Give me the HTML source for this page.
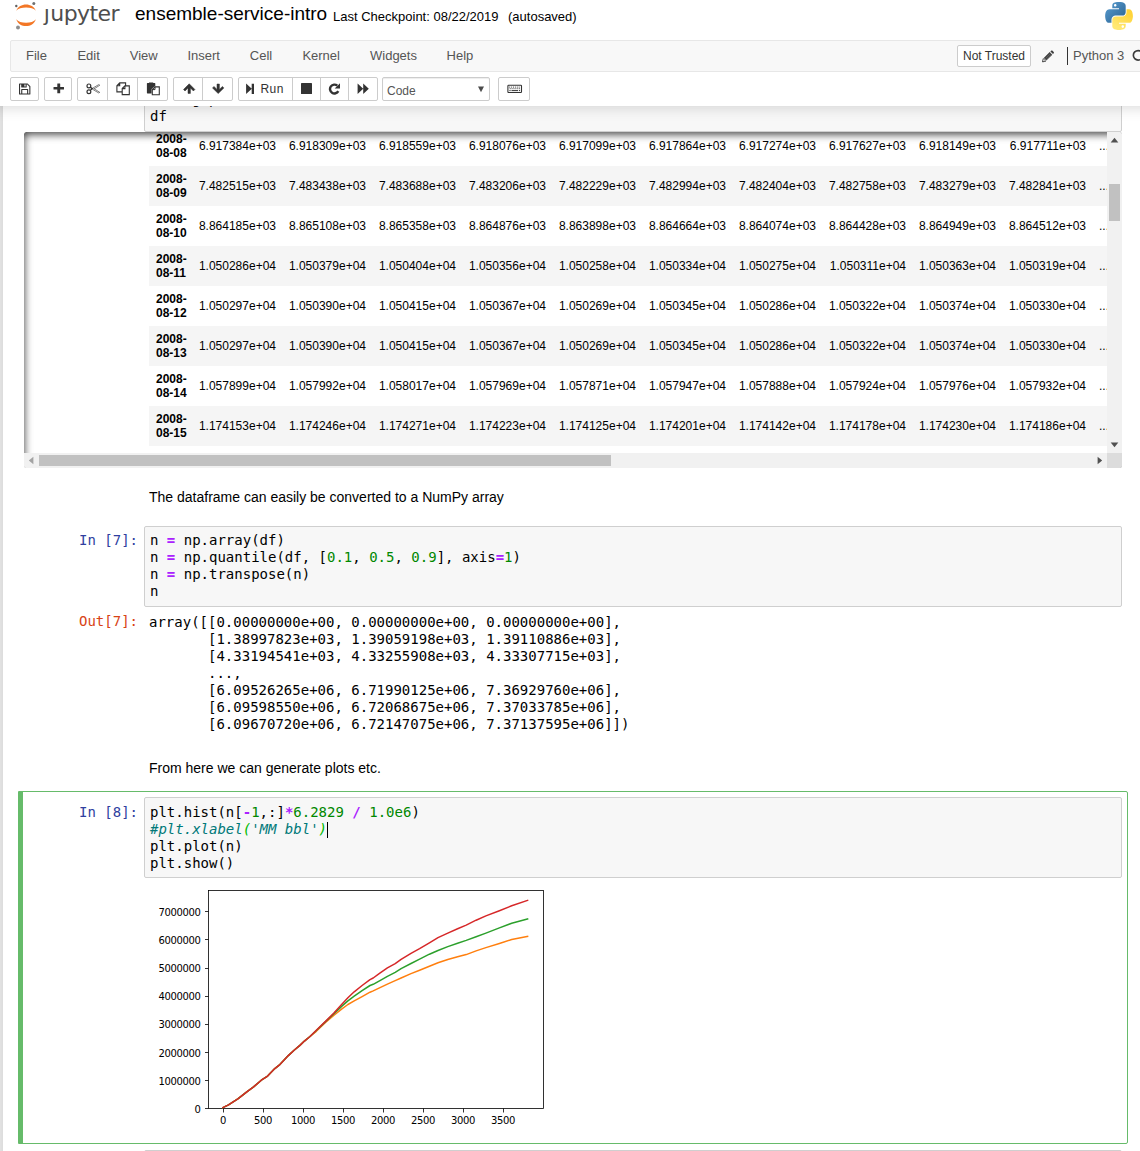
<!DOCTYPE html>
<html lang="en">
<head>
<meta charset="utf-8">
<title>ensemble-service-intro - Jupyter Notebook</title>
<style>
*{box-sizing:border-box;margin:0;padding:0}
html,body{width:1140px;height:1151px;overflow:hidden;background:#fff}
body{position:relative;font-family:"Liberation Sans",Arial,sans-serif;font-size:13px;color:#000}
.abs{position:absolute}
.mono{font-family:"DejaVu Sans Mono","Liberation Mono",monospace;font-size:14px;line-height:17px;white-space:pre}
/* page background strip */
#leftstrip{left:0;top:106px;width:3px;height:1045px;background:linear-gradient(to right,#e2e2e2,#dcdcdc)}
/* header */
#headerbg{left:-40px;top:0;width:1260px;height:106px;background:#fff;box-shadow:0 1px 12px 1px rgba(87,87,87,.22);z-index:9}
#header{left:0;top:0;width:1140px;height:106px;z-index:10}
#menubar{left:10px;top:40px;width:1160px;height:32px;background:#f8f8f8;border:1px solid #e7e7e7;border-radius:2px}
.menu{top:48px;font-size:13px;line-height:15px;color:#555}
.tbtn{top:77px;height:24px;background:#fff;border:1px solid #ccc;border-radius:2px}
.tdiv{top:78px;width:1px;height:22px;background:#ccc}
.ticon{position:absolute}
#title{left:135px;top:3px;font-size:19px;line-height:22px;color:#000;white-space:nowrap}
#chk{left:333px;top:9px;font-size:13px;line-height:15px;white-space:pre}
#auto{left:508px;top:9px;font-size:13px;line-height:15px}
/* cells */
.inbox{left:144px;width:978px;background:#f7f7f7;border:1px solid #cfcfcf;border-radius:2px}
.prompt-in{color:#303F9F}
.prompt-out{color:#D84315}
.md{left:149px;font-size:14px;line-height:20px;white-space:nowrap}
.k{color:#008000;font-weight:bold}.o{color:#AA22FF;font-weight:bold}.n{color:#080}.c{color:#007979;font-style:italic}.mb{color:#0b0}
/* table */
#scroll{left:24px;top:132px;width:1098px;height:336px;border-radius:2px;overflow:hidden;background:#fff}
#scrollshadow{left:0;top:0;width:1098px;height:336px;box-shadow:inset 0 2px 8px rgba(0,0,0,.8);border-radius:2px;pointer-events:none;z-index:0}
.row{left:125px;width:958px;height:40px;z-index:1}
.row.g{background:#f5f5f5}
.idx{left:7px;top:7px;font-size:12px;line-height:13.5px;font-weight:bold;width:40px}
.v{top:13px;width:90px;text-align:right;font-size:12px;line-height:14px;white-space:nowrap}
</style>
</head>
<body>
<div id="leftstrip" class="abs"></div>

<!-- NOTEBOOK -->
<div id="nb" class="abs" style="left:0;top:0;width:1140px;height:1151px">
<div class="abs inbox" style="top:60px;height:72px"></div>
<div class="abs mono" style="left:150px;top:91px">df = g.pivot()
df</div>
<div id="scroll" class="abs">
<div class="abs row" style="top:-6px"><div class="abs idx">2008-<br>08-08</div>
<div class="abs v" style="left:37px">6.917384e+03</div>
<div class="abs v" style="left:127px">6.918309e+03</div>
<div class="abs v" style="left:217px">6.918559e+03</div>
<div class="abs v" style="left:307px">6.918076e+03</div>
<div class="abs v" style="left:397px">6.917099e+03</div>
<div class="abs v" style="left:487px">6.917864e+03</div>
<div class="abs v" style="left:577px">6.917274e+03</div>
<div class="abs v" style="left:667px">6.917627e+03</div>
<div class="abs v" style="left:757px">6.918149e+03</div>
<div class="abs v" style="left:847px">6.917711e+03</div>
<div class="abs v" style="left:950px;width:20px;text-align:left">...</div></div>
<div class="abs row g" style="top:34px"><div class="abs idx">2008-<br>08-09</div>
<div class="abs v" style="left:37px">7.482515e+03</div>
<div class="abs v" style="left:127px">7.483438e+03</div>
<div class="abs v" style="left:217px">7.483688e+03</div>
<div class="abs v" style="left:307px">7.483206e+03</div>
<div class="abs v" style="left:397px">7.482229e+03</div>
<div class="abs v" style="left:487px">7.482994e+03</div>
<div class="abs v" style="left:577px">7.482404e+03</div>
<div class="abs v" style="left:667px">7.482758e+03</div>
<div class="abs v" style="left:757px">7.483279e+03</div>
<div class="abs v" style="left:847px">7.482841e+03</div>
<div class="abs v" style="left:950px;width:20px;text-align:left">...</div></div>
<div class="abs row" style="top:74px"><div class="abs idx">2008-<br>08-10</div>
<div class="abs v" style="left:37px">8.864185e+03</div>
<div class="abs v" style="left:127px">8.865108e+03</div>
<div class="abs v" style="left:217px">8.865358e+03</div>
<div class="abs v" style="left:307px">8.864876e+03</div>
<div class="abs v" style="left:397px">8.863898e+03</div>
<div class="abs v" style="left:487px">8.864664e+03</div>
<div class="abs v" style="left:577px">8.864074e+03</div>
<div class="abs v" style="left:667px">8.864428e+03</div>
<div class="abs v" style="left:757px">8.864949e+03</div>
<div class="abs v" style="left:847px">8.864512e+03</div>
<div class="abs v" style="left:950px;width:20px;text-align:left">...</div></div>
<div class="abs row g" style="top:114px"><div class="abs idx">2008-<br>08-11</div>
<div class="abs v" style="left:37px">1.050286e+04</div>
<div class="abs v" style="left:127px">1.050379e+04</div>
<div class="abs v" style="left:217px">1.050404e+04</div>
<div class="abs v" style="left:307px">1.050356e+04</div>
<div class="abs v" style="left:397px">1.050258e+04</div>
<div class="abs v" style="left:487px">1.050334e+04</div>
<div class="abs v" style="left:577px">1.050275e+04</div>
<div class="abs v" style="left:667px">1.050311e+04</div>
<div class="abs v" style="left:757px">1.050363e+04</div>
<div class="abs v" style="left:847px">1.050319e+04</div>
<div class="abs v" style="left:950px;width:20px;text-align:left">...</div></div>
<div class="abs row" style="top:154px"><div class="abs idx">2008-<br>08-12</div>
<div class="abs v" style="left:37px">1.050297e+04</div>
<div class="abs v" style="left:127px">1.050390e+04</div>
<div class="abs v" style="left:217px">1.050415e+04</div>
<div class="abs v" style="left:307px">1.050367e+04</div>
<div class="abs v" style="left:397px">1.050269e+04</div>
<div class="abs v" style="left:487px">1.050345e+04</div>
<div class="abs v" style="left:577px">1.050286e+04</div>
<div class="abs v" style="left:667px">1.050322e+04</div>
<div class="abs v" style="left:757px">1.050374e+04</div>
<div class="abs v" style="left:847px">1.050330e+04</div>
<div class="abs v" style="left:950px;width:20px;text-align:left">...</div></div>
<div class="abs row g" style="top:194px"><div class="abs idx">2008-<br>08-13</div>
<div class="abs v" style="left:37px">1.050297e+04</div>
<div class="abs v" style="left:127px">1.050390e+04</div>
<div class="abs v" style="left:217px">1.050415e+04</div>
<div class="abs v" style="left:307px">1.050367e+04</div>
<div class="abs v" style="left:397px">1.050269e+04</div>
<div class="abs v" style="left:487px">1.050345e+04</div>
<div class="abs v" style="left:577px">1.050286e+04</div>
<div class="abs v" style="left:667px">1.050322e+04</div>
<div class="abs v" style="left:757px">1.050374e+04</div>
<div class="abs v" style="left:847px">1.050330e+04</div>
<div class="abs v" style="left:950px;width:20px;text-align:left">...</div></div>
<div class="abs row" style="top:234px"><div class="abs idx">2008-<br>08-14</div>
<div class="abs v" style="left:37px">1.057899e+04</div>
<div class="abs v" style="left:127px">1.057992e+04</div>
<div class="abs v" style="left:217px">1.058017e+04</div>
<div class="abs v" style="left:307px">1.057969e+04</div>
<div class="abs v" style="left:397px">1.057871e+04</div>
<div class="abs v" style="left:487px">1.057947e+04</div>
<div class="abs v" style="left:577px">1.057888e+04</div>
<div class="abs v" style="left:667px">1.057924e+04</div>
<div class="abs v" style="left:757px">1.057976e+04</div>
<div class="abs v" style="left:847px">1.057932e+04</div>
<div class="abs v" style="left:950px;width:20px;text-align:left">...</div></div>
<div class="abs row g" style="top:274px"><div class="abs idx">2008-<br>08-15</div>
<div class="abs v" style="left:37px">1.174153e+04</div>
<div class="abs v" style="left:127px">1.174246e+04</div>
<div class="abs v" style="left:217px">1.174271e+04</div>
<div class="abs v" style="left:307px">1.174223e+04</div>
<div class="abs v" style="left:397px">1.174125e+04</div>
<div class="abs v" style="left:487px">1.174201e+04</div>
<div class="abs v" style="left:577px">1.174142e+04</div>
<div class="abs v" style="left:667px">1.174178e+04</div>
<div class="abs v" style="left:757px">1.174230e+04</div>
<div class="abs v" style="left:847px">1.174186e+04</div>
<div class="abs v" style="left:950px;width:20px;text-align:left">...</div></div>
<div id="scrollshadow" class="abs"></div>
<div class="abs" style="left:1083px;top:0;width:15px;height:321px;background:#f1f1f1;z-index:4"></div>
<div class="abs" style="left:1085px;top:52px;width:11px;height:37px;background:#c1c1c1;z-index:5"></div>
<svg class="abs" style="left:1086px;top:5px;z-index:5" width="9" height="6" viewBox="0 0 9 6"><path d="M0.7,5.4 L4.5,0.8 L8.3,5.4Z" fill="#505050"/></svg>
<svg class="abs" style="left:1086px;top:310px;z-index:5" width="9" height="6" viewBox="0 0 9 6"><path d="M0.7,0.6 L4.5,5.2 L8.3,0.6Z" fill="#505050"/></svg>
<div class="abs" style="left:0;top:321px;width:1083px;height:15px;background:#f1f1f1;z-index:4"></div>
<div class="abs" style="left:15px;top:323px;width:572px;height:11px;background:#c1c1c1;z-index:5"></div>
<svg class="abs" style="left:4px;top:324px;z-index:5" width="6" height="9" viewBox="0 0 6 9"><path d="M5.4,0.7 L0.8,4.5 L5.4,8.3Z" fill="#a3a3a3"/></svg>
<svg class="abs" style="left:1073px;top:324px;z-index:5" width="6" height="9" viewBox="0 0 6 9"><path d="M0.6,0.7 L5.2,4.5 L0.6,8.3Z" fill="#505050"/></svg>
<div class="abs" style="left:1083px;top:321px;width:15px;height:15px;background:#dcdcdc;z-index:4"></div>
</div>
<div class="abs md" style="top:487px">The dataframe can easily be converted to a NumPy array</div>
<div class="abs inbox" style="top:526px;height:81px"></div>
<div class="abs mono prompt-in" style="left:79px;top:532px">In [7]:</div>
<div class="abs mono" style="left:150px;top:532px">n <span class="o">=</span> np.array(df)
n <span class="o">=</span> np.quantile(df, [<span class="n">0.1</span>, <span class="n">0.5</span>, <span class="n">0.9</span>], axis<span class="o">=</span><span class="n">1</span>)
n <span class="o">=</span> np.transpose(n)
n</div>
<div class="abs mono prompt-out" style="left:79px;top:613px">Out[7]:</div>
<div class="abs mono" style="left:149px;top:614px">array([[0.00000000e+00, 0.00000000e+00, 0.00000000e+00],
       [1.38997823e+03, 1.39059198e+03, 1.39110886e+03],
       [4.33194541e+03, 4.33255908e+03, 4.33307715e+03],
       ...,
       [6.09526265e+06, 6.71990125e+06, 7.36929760e+06],
       [6.09598550e+06, 6.72068675e+06, 7.37033785e+06],
       [6.09670720e+06, 6.72147075e+06, 7.37137595e+06]])</div>
<div class="abs md" style="top:758px">From here we can generate plots etc.</div>
<div class="abs" style="left:18px;top:791px;width:1110px;height:353px;border:1px solid #66BB6A;border-radius:0 2px 2px 0;background:linear-gradient(to right,#66BB6A 0,#66BB6A 4px,transparent 4px)"></div>
<div class="abs inbox" style="top:797px;height:81px"></div>
<div class="abs mono prompt-in" style="left:79px;top:804px">In [8]:</div>
<div class="abs mono" style="left:150px;top:804px">plt.hist(n[<span class="o">-</span><span class="n">1</span>,:]<span class="o">*</span><span class="n">6.2829</span> <span class="o">/</span> <span class="n">1.0e6</span>)
<span class="c">#plt.xlabel<span class="mb">(</span>'MM bbl'<span class="mb">)</span></span>
plt.plot(n)
plt.show()</div>
<div class="abs" style="left:327px;top:822px;width:1px;height:16px;background:#000"></div>
<svg class="abs" style="left:150px;top:884px" width="400" height="252" viewBox="0 0 400 252" font-family="DejaVu Sans, sans-serif" font-size="10" fill="#000">
<rect x="58.5" y="6.5" width="335" height="218" fill="#fff" stroke="#000" stroke-width="0.8"/>
<path d="M73.5,224.5 v4" stroke="#000" stroke-width="0.8"/>
<text x="73.0" y="240.1" text-anchor="middle" letter-spacing="-0.36">0</text>
<path d="M113.5,224.5 v4" stroke="#000" stroke-width="0.8"/>
<text x="113.0" y="240.1" text-anchor="middle" letter-spacing="-0.36">500</text>
<path d="M153.5,224.5 v4" stroke="#000" stroke-width="0.8"/>
<text x="153.0" y="240.1" text-anchor="middle" letter-spacing="-0.36">1000</text>
<path d="M193.5,224.5 v4" stroke="#000" stroke-width="0.8"/>
<text x="193.0" y="240.1" text-anchor="middle" letter-spacing="-0.36">1500</text>
<path d="M233.5,224.5 v4" stroke="#000" stroke-width="0.8"/>
<text x="233.0" y="240.1" text-anchor="middle" letter-spacing="-0.36">2000</text>
<path d="M273.5,224.5 v4" stroke="#000" stroke-width="0.8"/>
<text x="273.0" y="240.1" text-anchor="middle" letter-spacing="-0.36">2500</text>
<path d="M313.5,224.5 v4" stroke="#000" stroke-width="0.8"/>
<text x="313.0" y="240.1" text-anchor="middle" letter-spacing="-0.36">3000</text>
<path d="M353.5,224.5 v4" stroke="#000" stroke-width="0.8"/>
<text x="353.0" y="240.1" text-anchor="middle" letter-spacing="-0.36">3500</text>
<path d="M58.5,224.5 h-3.5" stroke="#000" stroke-width="0.8"/>
<text x="50.5" y="228.7" text-anchor="end" letter-spacing="-0.36">0</text>
<path d="M58.5,196.5 h-3.5" stroke="#000" stroke-width="0.8"/>
<text x="50.5" y="200.6" text-anchor="end" letter-spacing="-0.36">1000000</text>
<path d="M58.5,168.5 h-3.5" stroke="#000" stroke-width="0.8"/>
<text x="50.5" y="172.5" text-anchor="end" letter-spacing="-0.36">2000000</text>
<path d="M58.5,140.5 h-3.5" stroke="#000" stroke-width="0.8"/>
<text x="50.5" y="144.4" text-anchor="end" letter-spacing="-0.36">3000000</text>
<path d="M58.5,112.5 h-3.5" stroke="#000" stroke-width="0.8"/>
<text x="50.5" y="116.3" text-anchor="end" letter-spacing="-0.36">4000000</text>
<path d="M58.5,84.5 h-3.5" stroke="#000" stroke-width="0.8"/>
<text x="50.5" y="88.2" text-anchor="end" letter-spacing="-0.36">5000000</text>
<path d="M58.5,55.5 h-3.5" stroke="#000" stroke-width="0.8"/>
<text x="50.5" y="60.2" text-anchor="end" letter-spacing="-0.36">6000000</text>
<path d="M58.5,27.5 h-3.5" stroke="#000" stroke-width="0.8"/>
<text x="50.5" y="32.1" text-anchor="end" letter-spacing="-0.36">7000000</text>
<polyline points="72.9,223.6 78.5,220.8 88.2,214.7 96.8,207.8 103.6,202.9 111.3,196.2 117.6,192.1 124.8,184.6 129.2,181.2 138.3,171.6 144.1,166.3 149.9,161.4 154.7,156.8 160.0,152.5 166.3,147.3 175.8,138.2 183.7,131.5 191.6,125.2 197.9,120.5 204.2,116.9 212.1,112.6 220.0,108.2 223.2,106.9 229.5,103.9 237.4,100.1 245.2,96.6 251.1,94.0 261.0,89.6 269.6,86.2 279.4,82.2 288.0,78.8 297.8,75.5 307.6,72.8 316.2,70.6 326.1,66.9 335.9,63.6 349.4,59.5 361.7,55.5 377.6,52.4" fill="none" stroke="#ff7f0e" stroke-width="1.5" stroke-linejoin="round" stroke-linecap="square"/>
<polyline points="72.9,223.6 78.5,220.8 88.2,214.7 96.8,207.8 103.6,202.9 111.3,196.2 117.6,192.1 124.8,184.6 129.2,181.2 138.3,171.6 144.1,166.3 149.9,161.4 154.7,156.8 160.0,152.5 166.3,146.5 175.8,137.4 183.7,129.9 191.6,122.4 197.9,116.9 204.2,112.2 212.1,106.7 220.0,101.5 223.2,100.3 229.5,96.8 237.4,92.4 245.2,88.3 251.1,84.6 261.0,79.5 269.6,75.2 279.4,70.2 288.0,66.5 297.8,62.6 307.6,59.3 316.2,56.4 326.1,52.8 335.9,49.1 349.4,43.9 361.7,39.2 377.6,34.9" fill="none" stroke="#2ca02c" stroke-width="1.5" stroke-linejoin="round" stroke-linecap="square"/>
<polyline points="72.9,223.6 78.5,220.8 88.2,214.7 96.8,207.8 103.6,202.9 111.3,196.2 117.6,192.1 124.8,184.6 129.2,181.2 138.3,171.6 144.1,166.3 149.9,161.4 154.7,156.8 160.0,152.5 166.3,146.2 175.8,137.1 183.7,129.2 191.6,120.5 197.9,113.8 204.2,107.8 212.1,101.5 220.0,95.6 223.2,94.0 229.5,89.3 237.4,83.8 245.2,79.6 251.1,75.4 261.0,69.3 269.6,64.7 279.4,58.9 288.0,53.6 297.8,49.1 307.6,44.8 316.2,41.1 326.1,36.2 335.9,31.9 349.4,26.7 361.7,21.8 377.6,16.4" fill="none" stroke="#d62728" stroke-width="1.5" stroke-linejoin="round" stroke-linecap="square"/>
</svg>
<div class="abs inbox" style="top:1150px;height:40px"></div>
</div>

<!-- HEADER -->
<div id="headerbg" class="abs"></div>
<div id="header" class="abs">
<!-- jupyter logo -->
<svg class="abs" style="left:12px;top:0" width="112" height="34" viewBox="0 0 112 34">
  <path d="M4.2,10.8 C7.2,2.3 20.9,2.3 23.9,10.8 C20.4,6.4 7.7,6.4 4.2,10.8Z" fill="#F37726"/>
  <path d="M4.2,19.2 C7.2,28.4 20.9,28.4 23.9,19.2 C20.4,23.9 7.7,23.9 4.2,19.2Z" fill="#F37726"/>
  <circle cx="21.8" cy="3.6" r="1.5" fill="#6f7070"/>
  <circle cx="4.3" cy="6" r="1.2" fill="#616262"/>
  <circle cx="6" cy="27.5" r="1.95" fill="#8e8e8e"/>
  <text x="31.8 38.3" y="20.5" font-family="DejaVu Sans, Liberation Sans, sans-serif" font-size="22" fill="#4E4E4E" letter-spacing="-0.6">jupyter</text>
  <rect x="31" y="0" width="6.5" height="8" fill="#fff"/>
</svg>
<div id="title" class="abs">ensemble-service-intro</div>
<div id="chk" class="abs">Last Checkpoint: 08/22/2019</div>
<div id="auto" class="abs">(autosaved)</div>
<!-- python logo -->
<svg class="abs" style="left:1105px;top:2px" width="28" height="28" viewBox="0 0 111 112">
  <defs><linearGradient id="pb" x1="0" y1="0" x2="0.85" y2="0.85"><stop offset="0" stop-color="#5A9FD4"/><stop offset="1" stop-color="#306998"/></linearGradient><linearGradient id="py" x1="0.75" y1="0.2" x2="0.35" y2="0.9"><stop offset="0" stop-color="#FFD43B"/><stop offset="1" stop-color="#FFE873"/></linearGradient></defs>
  <path fill="url(#pb)" d="M54.92,0 C50.34,0.02 45.96,0.41 42.11,1.09 C30.76,3.1 28.7,7.29 28.7,15.03 L28.7,25.25 L55.51,25.25 L55.51,28.66 L28.7,28.66 L18.64,28.66 C10.85,28.66 4.02,33.34 1.89,42.25 C-0.57,52.46 -0.68,58.84 1.89,69.5 C3.79,77.44 8.35,83.09 16.14,83.09 L25.36,83.09 L25.36,70.84 C25.36,61.99 33.01,54.19 42.11,54.19 L68.89,54.19 C76.34,54.19 82.29,48.05 82.29,40.56 L82.29,15.03 C82.29,7.77 76.16,2.31 68.89,1.09 C64.28,0.33 59.5,-0.02 54.92,0 Z M40.42,8.22 C43.19,8.22 45.45,10.52 45.45,13.34 C45.45,16.16 43.19,18.44 40.42,18.44 C37.64,18.44 35.39,16.16 35.39,13.34 C35.39,10.52 37.64,8.22 40.42,8.22 Z"/>
  <path fill="url(#py)" d="M85.64,28.66 L85.64,40.56 C85.64,49.79 77.81,57.56 68.89,57.56 L42.11,57.56 C34.77,57.56 28.7,63.84 28.7,71.19 L28.7,96.72 C28.7,103.99 35.02,108.26 42.11,110.34 C50.59,112.84 58.73,113.29 68.89,110.34 C75.64,108.39 82.29,104.46 82.29,96.72 L82.29,86.5 L55.51,86.5 L55.51,83.09 L82.29,83.09 L95.7,83.09 C103.49,83.09 106.4,77.66 109.11,69.5 C111.91,61.1 111.79,53.03 109.11,42.25 C107.18,34.49 103.5,28.66 95.7,28.66 L85.64,28.66 Z M70.58,93.31 C73.35,93.31 75.61,95.59 75.61,98.41 C75.61,101.23 73.35,103.53 70.58,103.53 C67.81,103.53 65.54,101.23 65.54,98.41 C65.54,95.59 67.81,93.31 70.58,93.31 Z"/>
</svg>
<!-- menubar -->
<div id="menubar" class="abs"></div>
<div class="abs menu" style="left:26px">File</div>
<div class="abs menu" style="left:77.4px">Edit</div>
<div class="abs menu" style="left:129.8px">View</div>
<div class="abs menu" style="left:187.4px">Insert</div>
<div class="abs menu" style="left:249.8px">Cell</div>
<div class="abs menu" style="left:302.4px">Kernel</div>
<div class="abs menu" style="left:370px">Widgets</div>
<div class="abs menu" style="left:446.6px">Help</div>
<!-- right side of menubar -->
<div class="abs" style="left:957px;top:45px;width:74px;height:22px;background:#fff;border:1px solid #ccc;border-radius:2px;font-size:12px;line-height:20px;text-align:center;color:#333">Not Trusted</div>
<svg class="abs" style="left:1042px;top:49.6px" width="13" height="13" viewBox="0 0 13 13"><path d="M0.5,11.9 L1.2,8.6 L3.8,11.2 Z" fill="#fff" stroke="#333" stroke-width="0.8" stroke-linejoin="round"/><path d="M0.5,11.9 L0.8,10.6 L1.8,11.6Z" fill="#333"/><path d="M1.8,8 L7.7,2.1 L10.3,4.7 L4.4,10.6 Z M8.4,1.4 L9.1,0.7 C9.5,0.3 10.1,0.3 10.5,0.7 L11.7,1.9 C12.1,2.3 12.1,2.9 11.7,3.3 L11,4 Z" fill="#3d3d3d"/><path d="M3.3,8.6 L8.6,3.3 M4,9.8 L9.6,4.2" stroke="#8a8a8a" stroke-width="0.45" fill="none"/></svg>
<div class="abs" style="left:1067px;top:47px;width:1px;height:18px;background:#333"></div>
<div class="abs" style="left:1073px;top:48px;font-size:13px;line-height:15px;color:#555;white-space:nowrap">Python 3</div>
<svg class="abs" style="left:1130px;top:48px" width="16" height="16" viewBox="0 0 16 16"><circle cx="8.1" cy="7.3" r="4.75" fill="none" stroke="#3a3a3a" stroke-width="1.65"/></svg>
<!-- toolbar -->
<div class="abs tbtn" style="left:10px;width:29px"></div>
<div class="abs tbtn" style="left:44px;width:28px"></div>
<div class="abs tbtn" style="left:77px;width:91px"></div><div class="abs tdiv" style="left:107px"></div><div class="abs tdiv" style="left:137px"></div>
<div class="abs tbtn" style="left:173px;width:60px"></div><div class="abs tdiv" style="left:202px"></div>
<div class="abs tbtn" style="left:238px;width:140px"></div><div class="abs tdiv" style="left:292px"></div><div class="abs tdiv" style="left:320px"></div><div class="abs tdiv" style="left:348px"></div>
<div class="abs tbtn" style="left:382px;width:108px;box-shadow:inset 0 1px 1px rgba(0,0,0,.075)"></div>
<div class="abs tbtn" style="left:498px;width:32px"></div>
<!-- toolbar icons -->
<svg class="abs" style="left:19.2px;top:82.5px" width="12" height="12" viewBox="0 0 12 12"><path fill="#333" fill-rule="evenodd" d="M0.6,0.4 H8.6 L11.4,3.2 V10.9 Q11.4,11.5 10.8,11.5 H0.6 Q0,11.5 0,10.9 V1 Q0,0.4 0.6,0.4Z M1.1,1.5 V10.4 H2.2 V6.6 Q2.2,6 2.8,6 H8.6 Q9.2,6 9.2,6.6 V10.4 H10.3 V3.7 L8.2,1.5 H7.7 V3.9 Q7.7,4.5 7.1,4.5 H2.8 Q2.2,4.5 2.2,3.9 V1.5Z M3.3,7.1 V10.4 H8.1 V7.1Z M5.4,1.5 V3.4 H6.6 V1.5Z"/></svg>
<svg class="abs" style="left:52.5px;top:82.5px" width="12" height="11" viewBox="0 0 12 11"><path fill="#333" d="M4.6,0.4 H6.9 Q7.2,0.4 7.2,0.7 V4 H10.7 Q11,4 11,4.3 V6.3 Q11,6.6 10.7,6.6 H7.2 V9.9 Q7.2,10.2 6.9,10.2 H4.6 Q4.3,10.2 4.3,9.9 V6.6 H0.8 Q0.5,6.6 0.5,6.3 V4.3 Q0.5,4 0.8,4 H4.3 V0.7 Q4.3,0.4 4.6,0.4Z"/></svg>
<svg class="abs" style="left:86px;top:82.5px" width="15" height="12" viewBox="0 0 15 12"><g fill="none" stroke="#333" stroke-width="1.2"><circle cx="2.9" cy="2.9" r="1.9"/><circle cx="2.9" cy="8.7" r="1.9"/></g><path fill="#333" d="M4.3,3.6 L7.6,5.6 L6.4,6.6 L4.5,7.7 L3.8,6.9 L5.2,5.8 L3.7,4.6Z"/><path fill="none" stroke="#555" stroke-width="0.75" d="M6.8,5.1 L12.6,1.7 L13.8,2.2 L7.9,6 M6.6,6.3 L12.6,9.9 L13.8,9.4 L7.9,5.6"/></svg>
<svg class="abs" style="left:115.5px;top:82px" width="15" height="14" viewBox="0 0 15 14"><path fill="none" stroke="#333" stroke-width="1.1" d="M6.2,9.9 H0.9 V3.7 L3.7,0.9 H9.6 V3.9 M3.7,0.9 V3.7 H0.9"/><path fill="#fff" stroke="#333" stroke-width="1.1" d="M8.9,3.9 H13.3 V12.6 H6.2 V6.6 Z"/><path fill="none" stroke="#333" stroke-width="1.1" d="M8.9,3.9 V6.6 H6.2"/></svg>
<svg class="abs" style="left:145.5px;top:82px" width="15" height="14" viewBox="0 0 15 14"><path fill="#333" d="M0.9,1.5 Q0.9,0.9 1.5,0.9 H3 V0.4 H7.2 V0.9 H8.7 Q9.3,0.9 9.3,1.5 V4.4 H8.3 L5.6,7.1 V11.4 H1.5 Q0.9,11.4 0.9,10.8Z"/><path fill="#fff" stroke="#333" stroke-width="1.1" d="M9,4.9 H13.3 V12.7 H6.3 V7.6 Z"/><path fill="none" stroke="#333" stroke-width="1" d="M9,4.9 V7.6 H6.3"/></svg>
<svg class="abs" style="left:182.7px;top:82.9px" width="13" height="12" viewBox="0 0 13 12"><path fill="#333" stroke="#333" stroke-width="0.5" stroke-linejoin="round" d="M6.2,0.8 L11.9,6.5 L10.4,8 L7.4,5 V10.4 H5 V5 L2,8 L0.5,6.5Z"/></svg>
<svg class="abs" style="left:211.7px;top:82.5px" width="13" height="12" viewBox="0 0 13 12"><path fill="#333" stroke="#333" stroke-width="0.5" stroke-linejoin="round" d="M6.2,10.6 L11.9,4.9 L10.4,3.4 L7.4,6.4 V1 H5 V6.4 L2,3.4 L0.5,4.9Z"/></svg>
<svg class="abs" style="left:246px;top:82.6px" width="9" height="12" viewBox="0 0 9 12"><path fill="#333" d="M0.1,0.6 L5.8,5.8 L0.1,11Z M5.7,0.7 H8 V10.9 H5.7Z"/></svg>
<div class="abs" style="left:260.5px;top:80px;font-size:12px;line-height:18px;color:#333;letter-spacing:.4px">Run</div>
<div class="abs" style="left:300.7px;top:83px;width:11.7px;height:11px;background:#333;border-radius:.6px"></div>
<svg class="abs" style="left:327.8px;top:83px" width="13" height="12" viewBox="0 0 13 12"><path fill="none" stroke="#333" stroke-width="2.4" d="M10.3,8.1 A4.4,4.4 0 1 1 9.3,2.7"/><path fill="#333" d="M12,0.2 V5.5 H6.7 Z"/></svg>
<svg class="abs" style="left:356.5px;top:83px" width="13" height="12" viewBox="0 0 13 12"><path fill="#333" d="M0.6,0.5 L6.2,5.8 L0.6,11Z M6.2,0.5 L11.8,5.8 L6.2,11Z"/></svg>
<div class="abs" style="left:387px;top:83.5px;font-size:12px;line-height:14px;color:#555">Code</div>
<svg class="abs" style="left:477px;top:85.5px" width="8" height="7" viewBox="0 0 8 7"><path fill="#4a4a4a" d="M1,0.4 H7 L4,6.2Z"/></svg>
<svg class="abs" style="left:507px;top:84px" width="16" height="10" viewBox="0 0 16 10"><rect x="0.9" y="1.2" width="13.6" height="7.3" rx="0.7" fill="none" stroke="#333" stroke-width="1.1"/><path stroke="#333" stroke-width="0.9" stroke-dasharray="1,0.9" d="M2.2,3.1 H13.4 M2.7,4.7 H13"/><path stroke="#333" stroke-width="1" d="M2.4,6.6 H3.6 M4.5,6.6 H11 M11.9,6.6 H13.1"/></svg>

</div>
</body>
</html>
